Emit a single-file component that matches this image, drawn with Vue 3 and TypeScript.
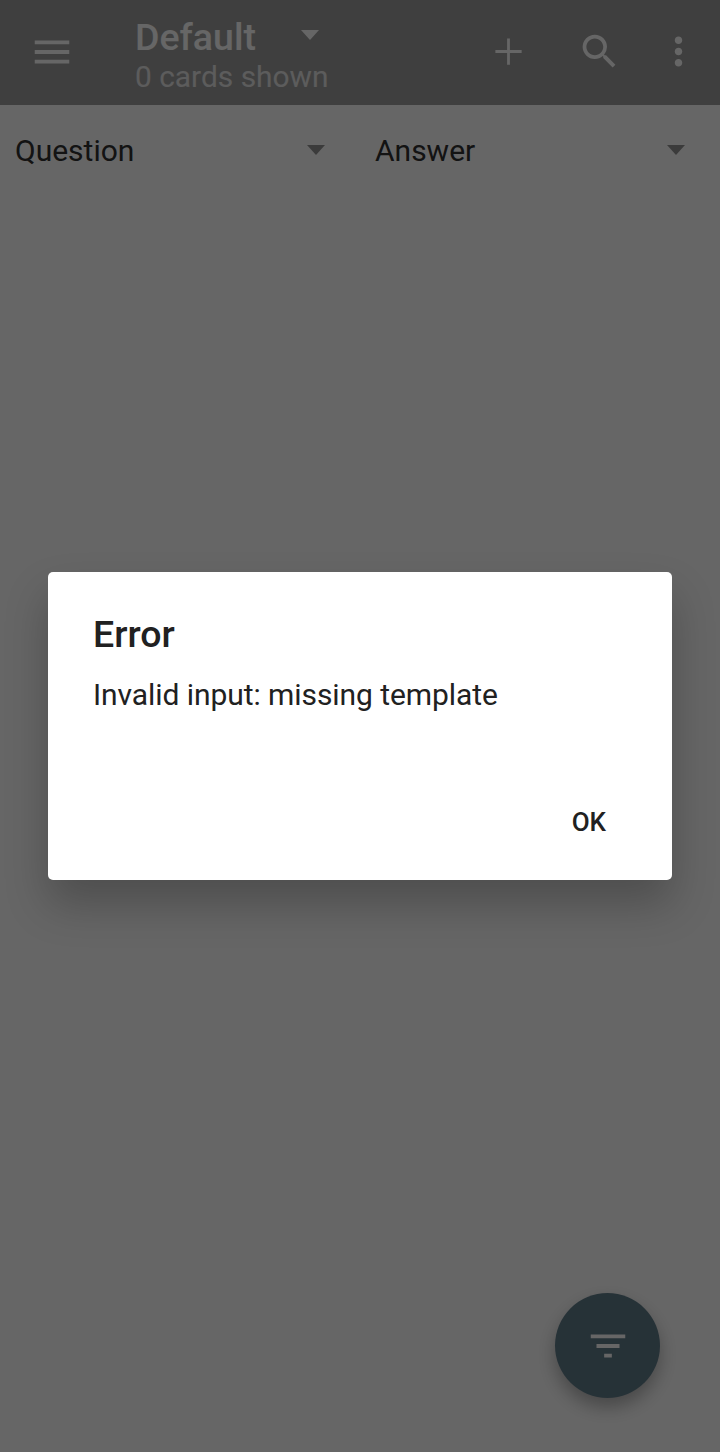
<script setup lang="ts">
const columns: string[] = ['Question', 'Answer']
</script>

<template>
  <div class="screen">
    <header class="toolbar">
      <svg class="menu-icon" viewBox="0 0 24 24"><path d="M3 18h18v-2H3v2zm0-5h18v-2H3v2zm0-7v2h18V6H3z" /></svg>
      <div class="titles">
        <div class="title-row">
          <span class="title">Default</span>
          <i class="title-arrow"></i>
        </div>
        <div class="subtitle">0 cards shown</div>
      </div>
      <div class="actions">
        <svg class="action add" viewBox="0 0 24 24"><path d="M19 12.75h-6.25V19h-1.5v-6.25H5v-1.5h6.25V5h1.5v6.25H19z" /></svg>
        <svg class="action search" viewBox="0 0 24 24"><path d="M15.5 14h-.79l-.28-.27A6.471 6.471 0 0 0 16 9.5 6.5 6.5 0 1 0 9.5 16c1.61 0 3.09-.59 4.23-1.57l.27.28v.79l5 4.99L20.49 19l-4.99-5zm-6 0C7.01 14 5 11.99 5 9.5S7.01 5 9.5 5 14 7.01 14 9.5 11.99 14 9.5 14z" /></svg>
        <svg class="action more" viewBox="0 0 24 24"><path d="M12 8c1.1 0 2-.9 2-2s-.9-2-2-2-2 .9-2 2 .9 2 2 2zm0 2c-1.1 0-2 .9-2 2s.9 2 2 2 2-.9 2-2-.9-2-2-2zm0 6c-1.1 0-2 .9-2 2s.9 2 2 2 2-.9 2-2-.9-2-2-2z" /></svg>
      </div>
    </header>

    <div class="columns">
      <div v-for="c in columns" :key="c" class="column">
        <span>{{ c }}</span>
        <i class="column-arrow"></i>
      </div>
    </div>

    <button class="fab" type="button" aria-label="Filter">
      <svg viewBox="0 0 24 24"><path d="M10 18h4v-2h-4v2zM3 6v2h18V6H3zm3 7h12v-2H6v2z" /></svg>
    </button>

    <div class="scrim">
      <div class="dialog">
        <h2 class="dialog-title">Error</h2>
        <p class="dialog-body">Invalid input: missing template</p>
        <div class="dialog-actions">
          <span class="ok">OK</span>
        </div>
      </div>
    </div>
  </div>
</template>

<style scoped>
.screen {
  position: relative;
  width: 720px;
  height: 1452px;
  overflow: hidden;
  background: #fff;
  font-family: Roboto, "Liberation Sans", sans-serif;
}
.toolbar {
  display: flex;
  align-items: flex-start;
  height: 105px;
  background: #9e9e9e;
  color: #fff;
}
.menu-icon {
  flex: none;
  width: 46px;
  height: 46px;
  margin: 29px 0 0 29px;
  fill: #fff;
}
.titles {
  margin: 15px 0 0 60px;
}
.title-row {
  display: flex;
  align-items: flex-start;
  height: 44px;
}
.title {
  font-size: 37.5px;
  line-height: 44px;
  font-weight: 500;
}
.title-arrow {
  width: 0;
  height: 0;
  margin: 15px 0 0 45px;
  border-left: 9.5px solid transparent;
  border-right: 9.5px solid transparent;
  border-top: 10px solid #fff;
}
.subtitle {
  font-size: 29.9px;
  line-height: 36px;
  color: #e6e6e6;
}
.actions {
  display: flex;
  margin-left: auto;
  align-items: center;
  height: 46px;
  margin-top: 28.5px;
  padding-right: 19px;
}
.action {
  flex: none;
  width: 45px;
  height: 45px;
  fill: #fff;
}
.search {
  margin-left: 46px;
}
.more {
  margin-left: 34px;
}
.columns {
  display: flex;
  height: 90px;
}
.column {
  display: flex;
  align-items: center;
  justify-content: space-between;
  width: 360px;
  padding: 0 35.5px 0 15px;
  box-sizing: border-box;
  font-size: 30px;
  color: #303030;
}
.column-arrow {
  width: 0;
  height: 0;
  border-left: 9.5px solid transparent;
  border-right: 9.5px solid transparent;
  border-top: 10px solid #949494;
}
.fab {
  position: absolute;
  right: 60px;
  bottom: 54px;
  display: flex;
  align-items: center;
  justify-content: center;
  width: 105px;
  height: 105px;
  padding: 0;
  border: 0;
  border-radius: 50%;
  background: #607d8b;
  box-shadow: 0 9px 18px rgba(0, 0, 0, 0.3);
}
.fab svg {
  width: 46px;
  height: 46px;
  fill: #fff;
}
.scrim {
  position: absolute;
  inset: 0;
  display: flex;
  align-items: center;
  justify-content: center;
  background: rgba(0, 0, 0, 0.6);
}
.dialog {
  display: flex;
  flex-direction: column;
  width: 624px;
  height: 308px;
  box-sizing: border-box;
  padding: 39.5px 46px 0 45px;
  border-radius: 5px;
  background: #fff;
  box-shadow: 0 24px 44px rgba(0, 0, 0, 0.24);
  color: #212121;
}
.dialog-title {
  margin: 0;
  font-size: 37.5px;
  line-height: 44px;
  font-weight: 500;
}
.dialog-body {
  margin: 22.5px 0 0;
  font-size: 30px;
  line-height: 34px;
  letter-spacing: -0.07px;
}
.dialog-actions {
  display: flex;
  justify-content: flex-end;
  margin-top: 94px;
}
.ok {
  font-size: 26px;
  line-height: 32px;
  font-weight: 500;
  margin-right: 20px;
}
</style>
